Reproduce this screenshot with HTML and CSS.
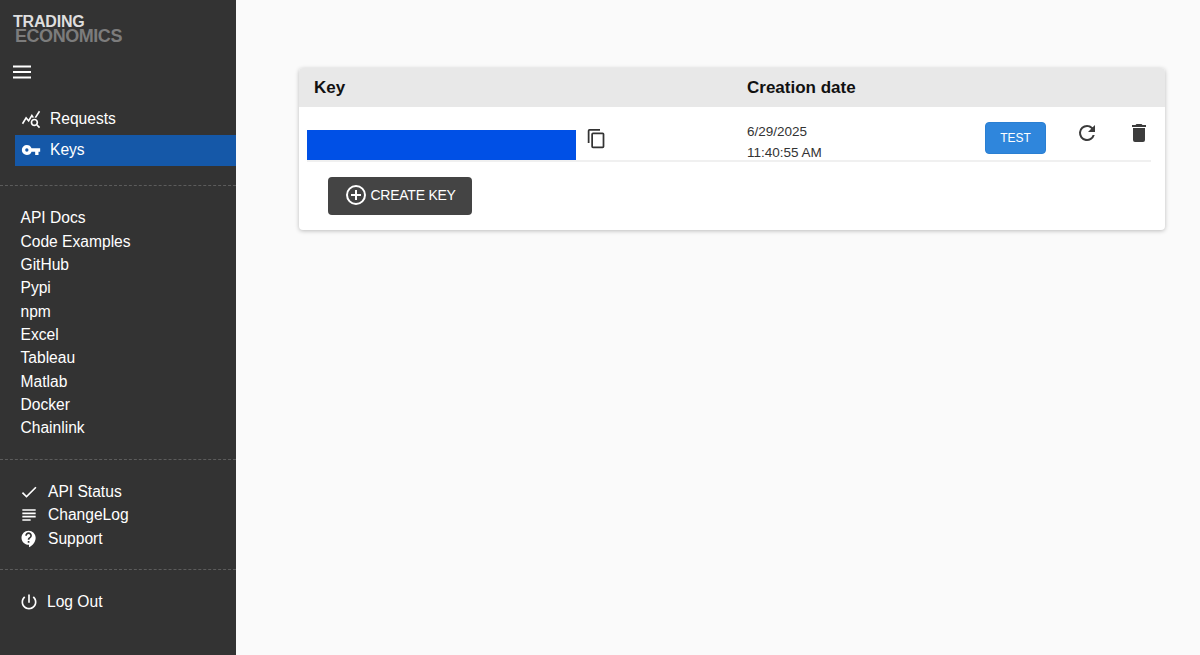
FILE: index.html
```html
<!DOCTYPE html>
<html lang="en">
<head>
<meta charset="utf-8">
<title>Trading Economics API</title>
<link rel="stylesheet" href="styles.css">
</head>
<body>
<div class="app">
  <aside class="sidebar">
    <div class="logo"><span class="logo-top">TRADING</span><span class="logo-bottom">ECONOMICS</span></div>
    <button class="burger" aria-label="Menu"><svg width="20" height="14" viewBox="0 0 20 14"><path d="M1 1.500h18M1 7h18M1 12.500h18" stroke="#fff" stroke-width="2" fill="none"/></svg></button>
    <nav class="main-nav">
      <a class="nav-row"><svg class="nav-icon" width="20" height="20" viewBox="0 0 24 24" fill="#fff"><path d="M19.880 18.470c.44-.7.7-1.510.7-2.390 0-2.490-2.010-4.500-4.500-4.500s-4.500 2.010-4.500 4.500 2.010 4.500 4.490 4.500c.88 0 1.700-.26 2.390-.7L21.580 23 23 21.590l-3.120-3.120zm-3.800.11c-1.380 0-2.500-1.120-2.500-2.500s1.120-2.500 2.500-2.500 2.500 1.120 2.500 2.500-1.120 2.500-2.500 2.500zm-.36-8.500c-.74.02-1.450.18-2.100.45l-.55-.83-3.800 6.180-3.010-3.520-3.630 5.810L1 17l5-8 3 3.500L13 6l2.720 4.080zm2.590.5c-.64-.28-1.330-.45-2.050-.49L21.380 2 23 3.180l-4.690 7.400z"/></svg><span>Requests</span></a>
      <a class="nav-row active"><svg class="nav-icon" width="20" height="20" viewBox="0 0 24 24" fill="#fff"><path d="M12.650 10A6 6 0 0 0 7 6a6 6 0 0 0 0 12 6 6 0 0 0 5.650-4H17v4h4v-4h2v-4H12.650zM7 14a2 2 0 1 1 0-4 2 2 0 0 1 0 4z"/></svg><span>Keys</span></a>
    </nav>
    <hr class="rule">
    <ul class="links">
      <li>API Docs</li><li>Code Examples</li><li>GitHub</li><li>Pypi</li><li>npm</li><li>Excel</li><li>Tableau</li><li>Matlab</li><li>Docker</li><li>Chainlink</li>
    </ul>
    <hr class="rule">
    <ul class="status">
      <li><svg width="20" height="20" viewBox="0 0 24 24" fill="#fff"><path d="M9 16.170L4.830 12l-1.420 1.410L9 19 21 7l-1.410-1.410z"/></svg><span>API Status</span></li>
      <li><svg width="20" height="20" viewBox="0 0 24 24" fill="#fff"><path d="M14 17H4v2h10v-2zm6-8H4v2h16V9zM4 15h16v-2H4v2zM4 5v2h16V5H4z"/></svg><span>ChangeLog</span></li>
      <li><svg width="20" height="20" viewBox="0 0 24 24" fill="#fff"><path d="M11.500 2C6.810 2 3 5.810 3 10.500S6.810 19 11.500 19h.5v3c4.860-2.340 8-7 8-11.500C20 5.810 16.190 2 11.500 2zm1 14.500h-2v-2h2v2zm0-3.500h-2c0-3.250 3-3 3-5 0-1.100-.9-2-2-2s-2 .9-2 2h-2c0-2.210 1.790-4 4-4s4 1.790 4 4c0 2.500-3 2.750-3 5z"/></svg><span>Support</span></li>
    </ul>
    <hr class="rule">
    <a class="logout"><svg width="20" height="20" viewBox="0 0 24 24" fill="#fff"><path d="M13 3h-2v10h2V3zm4.830 2.170l-1.420 1.420C17.990 7.860 19 9.810 19 12c0 3.870-3.130 7-7 7s-7-3.130-7-7c0-2.190 1.010-4.140 2.580-5.420L6.170 5.170C4.230 6.820 3 9.260 3 12c0 4.970 4.030 9 9 9s9-4.030 9-9c0-2.740-1.230-5.180-3.170-6.830z"/></svg><span>Log Out</span></a>
  </aside>
  <main class="content">
    <section class="card">
      <div class="head">
        <div class="head-key">Key</div>
        <div class="head-date">Creation date</div>
      </div>
      <div class="row">
        <div class="key-bar"></div>
        <svg class="copy" width="21" height="21" viewBox="0 0 24 24" fill="#333"><path d="M16 1H4a2 2 0 0 0-2 2v14h2V3h12V1zm3 4H8a2 2 0 0 0-2 2v14a2 2 0 0 0 2 2h11a2 2 0 0 0 2-2V7a2 2 0 0 0-2-2zm0 16H8V7h11v14z"/></svg>
        <div class="date"><div>6/29/2025</div><div>11:40:55 AM</div></div>
        <button class="test">TEST</button>
        <svg class="refresh" width="24" height="24" viewBox="0 0 24 24" fill="#3c3c3c"><path d="M17.650 6.350A7.958 7.958 0 0 0 12 4a8 8 0 1 0 7.730 10h-2.080A6 6 0 1 1 12 6c1.660 0 3.140.69 4.220 1.780L13 11h7V4l-2.350 2.350z"/></svg>
        <svg class="trash" width="24" height="24" viewBox="0 0 24 24" fill="#3c3c3c"><path d="M6 19a2 2 0 0 0 2 2h8a2 2 0 0 0 2-2V7H6v12zM19 4h-3.500l-1-1h-5l-1 1H5v2h14V4z"/></svg>
      </div>
      <div class="actions">
        <button class="create"><svg width="24" height="24" viewBox="0 0 24 24" fill="#fff"><path d="M13 7h-2v4H7v2h4v4h2v-4h4v-2h-4V7zm-1-5a10 10 0 1 0 0 20 10 10 0 0 0 0-20zm0 18a8 8 0 1 1 0-16 8 8 0 0 1 0 16z"/></svg><span>CREATE KEY</span></button>
      </div>
    </section>
  </main>
</div>
</body>
</html>
```
FILE: styles.css
```css
* { box-sizing: border-box; }
html, body { margin: 0; height: 100%; }
body { font-family: "Liberation Sans", Arial, sans-serif; color: #222; background: #fafafa; overflow: hidden; }
.app { display: flex; height: 655px; }
.sidebar { width: 236px; flex: none; background: #333; color: #fff; font-size: 15.6px; display: flex; flex-direction: column; }
.logo { display: flex; flex-direction: column; padding: 14px 0 0 13px; height: 62px; font-weight: 700; }
.logo-top { font-size: 16px; line-height: 15px; color: #dedede; letter-spacing: -0.2px; }
.logo-bottom { font-size: 18px; line-height: 14px; color: #7c7c7c; margin-left: 2px; letter-spacing: -0.45px; }
.burger { background: none; border: 0; padding: 0 0 0 12px; height: 20px; width: 50px; display: flex; align-items: center; }
.main-nav { margin-top: 21px; padding-left: 15px; }
.nav-row { display: flex; align-items: center; height: 31.500px; padding-left: 6px; gap: 9px; }
.nav-row.active { background: #1558a8; }
.rule { border: 0; border-top: 1px dashed #5c5c5c; margin: 0; width: 100%; }
.main-nav + .rule { margin-top: 19px; }
.links { list-style: none; margin: 0; padding: 20.300px 0 19.700px 20.500px; }
.links li { height: 23.350px; line-height: 23.350px; }
.status { list-style: none; margin: 0; padding: 20px 0 19px 19px; }
.status li { display: flex; align-items: center; gap: 9px; height: 23.350px; }
.logout { display: flex; align-items: center; gap: 8px; padding: 22px 0 0 19px; }
.content { flex: 1; padding: 68px 35px 0 63px; }
.card { background: #fff; border-radius: 4px; box-shadow: 0 1px 4px rgba(0,0,0,.25); height: 162px; overflow: hidden; }
.head { display: flex; height: 39px; padding-top: 1px; align-items: center; background: #e8e8e8; font-size: 17px; font-weight: 700; color: #111; }
.head-key { width: 448px; padding-left: 15px; }
.row { display: flex; align-items: flex-start; height: 55px; margin: 0 14px 0 8px; border-bottom: 2px solid #f0f0f0; }
.key-bar { width: 269px; height: 29.500px; background: #0050e6; margin-top: 23px; }
.copy { margin: 21px 0 0 10px; flex: none; }
.date { width: 238px; flex: none; margin: 15px 0 0 140px; font-size: 13.500px; line-height: 20.500px; color: #333; }
.test { width: 61px; height: 32px; flex: none; margin-top: 15px; background: #2f86dc; color: #fff; border: 1px solid #2a7fd2; border-radius: 4px; font: 12px "Liberation Sans", Arial, sans-serif; padding: 0; }
.refresh { margin: 14px 0 0 29px; flex: none; }
.trash { margin: 14px 0 0 28px; flex: none; }
.actions { padding: 15px 0 0 29px; }
.create { display: flex; align-items: center; gap: 3px; width: 144px; height: 38px; padding: 0 0 2px 15.500px; background: #444; color: #fff; border: 0; border-radius: 4px; font: 14px "Liberation Sans", Arial, sans-serif; letter-spacing: -0.25px; }
```
